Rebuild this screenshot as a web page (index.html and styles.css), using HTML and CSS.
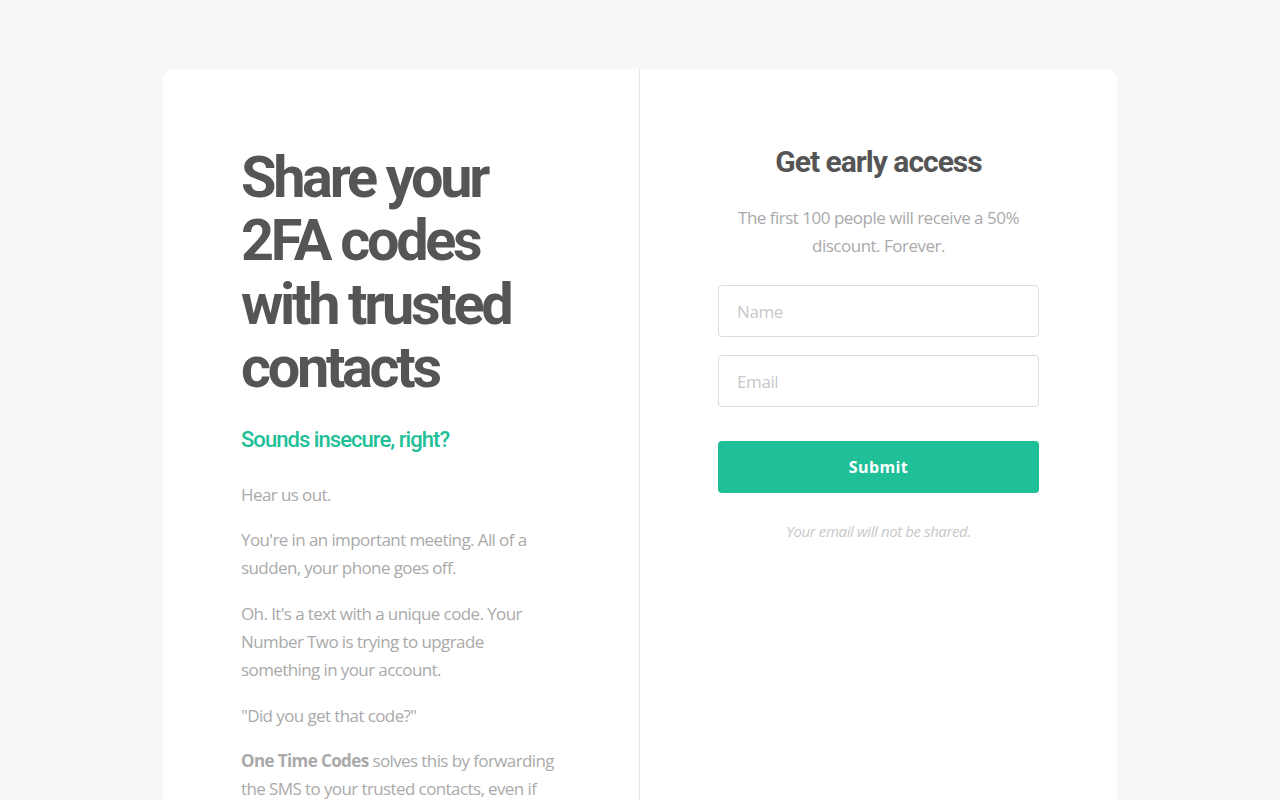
FILE: index.html
```
<!DOCTYPE html>
<html lang="en">
<head>
<meta charset="utf-8">
<title>One Time Codes</title>
<link rel="stylesheet" href="styles.css">
</head>
<body>
<main class="card">
  <section class="intro">
    <h1 class="title">Share your 2FA codes with trusted contacts</h1>
    <h2 class="subtitle">Sounds insecure, right?</h2>
    <p class="copy">Hear us out.</p>
    <p class="copy">You're in an important meeting. All of a sudden, your phone goes off.</p>
    <p class="copy">Oh. It's a text with a unique code. Your Number Two is trying to upgrade something in your account.</p>
    <p class="copy">"Did you get that code?"</p>
    <p class="copy"><strong>One Time Codes</strong> solves this by forwarding the SMS to your trusted contacts, even if your phone is on silent.</p>
  </section>
  <section class="signup">
    <h2 class="signup-title">Get early access</h2>
    <p class="signup-text">The first 100 people will receive a 50% discount. Forever.</p>
    <form class="form">
      <input class="field" type="text" placeholder="Name">
      <input class="field" type="email" placeholder="Email">
      <button class="submit" type="button">Submit</button>
    </form>
    <p class="note">Your email will not be shared.</p>
  </section>
</main>
</body>
</html>
```
FILE: styles.css
```
* { box-sizing: border-box; }
html, body { margin: 0; padding: 0; }
body {
  background: #f7f7f7;
  font-family: "Open Sans", "Liberation Sans", sans-serif;
  padding-top: 69px;
}
.card {
  width: 954px;
  margin: 0 auto;
  background: #fff;
  border-radius: 12px;
  display: grid;
  grid-template-columns: 477px 1fr;
  min-height: 900px;
}
.intro {
  padding: 77px 78px 78px;
  border-right: 1px solid #e6e6e6;
}
.title {
  margin: 0;
  font-family: Roboto, "Liberation Sans", sans-serif;
  font-weight: 700;
  font-size: 57.6px;
  line-height: 1.1;
  letter-spacing: -3.3px;
  color: #555;
}
.subtitle {
  margin: 28px 0 0;
  font-family: Roboto, "Liberation Sans", sans-serif;
  font-weight: 500;
  font-size: 22px;
  line-height: 1.2;
  letter-spacing: -0.95px;
  color: #1fbf98;
}
.copy {
  margin: 17.6px 0 0;
  font-size: 17px;
  line-height: 28px;
  letter-spacing: -0.6px;
  color: #aaa;
}
.subtitle + .copy { margin-top: 27px; }
.copy strong { font-weight: 700; color: #aaa; }
.signup {
  padding: 75px 78px 78px;
  text-align: center;
}
.signup-title {
  margin: 0;
  font-family: Roboto, "Liberation Sans", sans-serif;
  font-weight: 700;
  font-size: 30px;
  line-height: 36px;
  letter-spacing: -1px;
  color: #555;
}
.signup-text {
  margin: 24px 0 0;
  font-size: 17px;
  line-height: 28px;
  letter-spacing: -0.5px;
  color: #aaa;
}
.form {
  margin-top: 25px;
  display: flex;
  flex-direction: column;
  gap: 18px;
}
.field {
  height: 52px;
  border: 1px solid #dcdcdc;
  border-radius: 4px;
  padding: 0 18px;
  font-family: "Open Sans", "Liberation Sans", sans-serif;
  font-size: 17px;
  letter-spacing: -0.4px;
  color: #555;
  background: #fff;
  outline: none;
}
.field::placeholder { color: #c8c8c8; }
.submit {
  margin-top: 16px;
  height: 52px;
  border: 0;
  border-radius: 4px;
  background: #1fbf98;
  color: #fff;
  font-family: "Open Sans", "Liberation Sans", sans-serif;
  font-weight: 700;
  font-size: 16px;
  letter-spacing: 0.4px;
}
.note {
  margin: 28px 0 0;
  font-size: 15px;
  font-style: italic;
  letter-spacing: -0.4px;
  color: #c8c8c8;
}
```
